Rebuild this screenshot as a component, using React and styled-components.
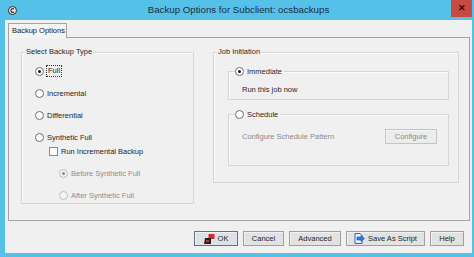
import React from 'react';
import styled, { createGlobalStyle } from 'styled-components';

const Global = createGlobalStyle`
  html, body { margin: 0; padding: 0; background: #55c1e9; }
  body { font-family: "Liberation Sans", Arial, sans-serif; }
  * { box-sizing: border-box; }
`;

const Window = styled.div`
  width: 474px;
  height: 257px;
  background: #55c1e9;
  display: grid;
  grid-template-rows: 20px 1fr;
  padding: 0 2px 4px 5px;
`;

const TitleBar = styled.div`
  display: grid;
  grid-template-columns: 30px 1fr 30px;
  align-items: center;
`;

const AppIcon = styled.svg`
  margin-left: 3px;
`;

const Title = styled.div`
  text-align: center;
  font-size: 9.7px;
  color: #1d2b3c;
  line-height: 20px;
`;

const CloseBtn = styled.div`
  justify-self: end;
  align-self: start;
  width: 21px;
  height: 17px;
  background: #c9483f;
  color: #2a0a08;
  display: flex;
  align-items: center;
  justify-content: center;
  font-size: 9px;
  font-weight: bold;
  line-height: 1;
`;

const Content = styled.div`
  background: #f0f0f0;
  display: flex;
  flex-direction: column;
  padding: 3px 2px 0 3px;
`;

const TabStrip = styled.div`
  display: flex;
  height: 14px;
  position: relative;
  z-index: 1;
`;

const Tab = styled.div`
  width: 59px;
  height: 15px;
  border: 1px solid #a3a3a3;
  border-bottom: none;
  background: #f4f4f4;
  font-size: 7.5px;
  line-height: 13px;
  padding-left: 3px;
  color: #1a1a1a;
  white-space: nowrap;
`;

const Panel = styled.div`
  height: 184px;
  border: 1px solid #a3a3a3;
  background: #f0f0f0;
  display: flex;
  align-items: flex-start;
  gap: 19px;
  padding: 9px 10px 0 12px;
`;

const GroupBox = styled.fieldset`
  margin: 0;
  min-inline-size: 0;
  width: ${p => p.$w}px;
  height: ${p => p.$h}px;
  border: 1px solid #d6d6d6;
  box-shadow: inset 1px 1px 0 #fbfbfb;
  padding: ${p => p.$pad};
  display: flex;
  flex-direction: column;
  gap: ${p => p.$gap || 0}px;
`;

const GroupTitle = styled.legend`
  margin-left: ${p => p.$ml}px;
  padding: 0 1px;
  font-size: 7.5px;
  line-height: 10px;
  color: #1f1f1f;
  white-space: nowrap;
`;

const RadioLegend = styled.legend`
  margin-left: -7px;
  padding: 0 2px 0 0;
  height: 12px;
  display: flex;
  align-items: center;
  gap: 3px;
  font-size: 7.5px;
  color: #1f1f1f;
`;

const OptionColumn = styled.div`
  display: flex;
  flex-direction: column;
  gap: ${p => p.$gap}px;
  padding-left: ${p => p.$indent || 0}px;
`;

const Option = styled.div`
  display: flex;
  align-items: center;
  gap: 3px;
  height: 14px;
  font-size: 7.5px;
  color: ${p => (p.$disabled ? '#8e8e8e' : '#1f1f1f')};
  white-space: nowrap;
`;

const Radio = styled.span`
  width: 9px;
  height: 9px;
  border-radius: 50%;
  border: 1px solid ${p => (p.$disabled ? '#bcbcbc' : '#6f6f6f')};
  background: ${p => (p.$disabled ? '#f4f4f4' : '#ffffff')};
  display: flex;
  align-items: center;
  justify-content: center;
  flex: none;
  &::after {
    content: '';
    width: 3px;
    height: 3px;
    border-radius: 50%;
    background: ${p => (p.$disabled ? '#8a8a8a' : '#1a1a1a')};
    display: ${p => (p.$checked ? 'block' : 'none')};
  }
`;

const Check = styled.span`
  width: 9px;
  height: 9px;
  border: 1px solid #8a8a8a;
  background: #ffffff;
  flex: none;
`;

const Focused = styled.span`
  outline: 1px dotted #333;
  outline-offset: 0;
  padding: 0 1px;
  line-height: 10px;
`;

const Note = styled.div`
  font-size: 7.5px;
  line-height: 10px;
  color: ${p => (p.$disabled ? '#8a8a8a' : '#1f1f1f')};
  white-space: nowrap;
`;

const Row = styled.div`
  display: flex;
  align-items: center;
  justify-content: space-between;
  height: 15px;
`;

const ButtonBar = styled.div`
  display: flex;
  justify-content: flex-end;
  gap: 5px;
  padding: 10px 6px 0 0;
`;

const Button = styled.div`
  width: ${p => p.$w}px;
  height: 15px;
  border: 1px solid ${p => (p.$default ? '#5f7286' : p.$disabled ? '#c4c4c4' : '#9f9f9f')};
  background: ${p => (p.$default ? '#dde2e8' : p.$disabled ? '#ececec' : '#e2e2e2')};
  box-shadow: inset 1px 1px 0 ${p => (p.$disabled ? '#f6f6f6' : '#f2f2f2')};
  display: flex;
  align-items: center;
  justify-content: center;
  gap: 3px;
  font-size: 7.5px;
  color: ${p => (p.$disabled ? '#8a8a8a' : '#1f1f1f')};
  white-space: nowrap;
`;

const OkIcon = () => (
  <svg width="11" height="10" viewBox="0 0 11 10">
    <rect x="4.5" y="0" width="6" height="5" fill="#d42a2a" />
    <path d="M1 4 H7 V10 H0 Z" fill="#222" />
    <rect x="2" y="6" width="3" height="2" fill="#d42a2a" />
  </svg>
);

const ScriptIcon = () => (
  <svg width="11" height="11" viewBox="0 0 11 11">
    <path d="M1 0.5 H6 L8 2.5 V10.5 H1 Z" fill="#e8f0fb" stroke="#2d64c8" />
    <path d="M3 4 H7 V2.5 L10.5 5.5 L7 8.5 V7 H3 Z" fill="#2f7be0" stroke="#1b4fa6" strokeWidth="0.6" />
  </svg>
);

export default function App() {
  return (
    <>
      <Global />
      <Window>
        <TitleBar>
          <AppIcon width="9" height="9" viewBox="0 0 9 9">
            <circle cx="4.5" cy="4.5" r="4" fill="#e6e6e6" stroke="#2b2b2b" strokeWidth="1" />
            <path d="M6 3.2 A1.8 1.8 0 1 0 6 5.8" fill="none" stroke="#2b2b2b" strokeWidth="1.1" />
          </AppIcon>
          <Title>Backup Options for Subclient: ocsbackups</Title>
          <CloseBtn>✕</CloseBtn>
        </TitleBar>
        <Content>
          <TabStrip>
            <Tab>Backup Options</Tab>
          </TabStrip>
          <Panel>
            <GroupBox $w={173} $h={157} $pad="7px 8px 0 13px" $gap={8}>
              <GroupTitle $ml={-10}>Select Backup Type</GroupTitle>
              <Option>
                <Radio $checked />
                <Focused>Full</Focused>
              </Option>
              <Option>
                <Radio />
                Incremental
              </Option>
              <Option>
                <Radio />
                Differential
              </Option>
              <OptionColumn $gap={0}>
                <Option>
                  <Radio />
                  Synthetic Full
                </Option>
                <OptionColumn $gap={8} $indent={14}>
                  <Option>
                    <Check />
                    Run Incremental Backup
                  </Option>
                  <OptionColumn $gap={8} $indent={10}>
                    <Option $disabled>
                      <Radio $checked $disabled />
                      Before Synthetic Full
                    </Option>
                    <Option $disabled>
                      <Radio $disabled />
                      After Synthetic Full
                    </Option>
                  </OptionColumn>
                </OptionColumn>
              </OptionColumn>
            </GroupBox>

            <GroupBox $w={246} $h={136} $pad="8px 9px 0 14px" $gap={8}>
              <GroupTitle $ml={-11}>Job Initiation</GroupTitle>
              <GroupBox $w={221} $h={35} $pad="8px 8px 0 13px">
                <RadioLegend>
                  <Radio $checked />
                  Immediate
                </RadioLegend>
                <Note>Run this job now</Note>
              </GroupBox>
              <GroupBox $w={221} $h={58} $pad="9px 11px 0 13px">
                <RadioLegend>
                  <Radio />
                  Schedule
                </RadioLegend>
                <Row>
                  <Note $disabled>Configure Schedule Pattern</Note>
                  <Button $w={52} $disabled>Configure</Button>
                </Row>
              </GroupBox>
            </GroupBox>
          </Panel>
          <ButtonBar>
            <Button $w={44} $default>
              <OkIcon />
              OK
            </Button>
            <Button $w={41}>Cancel</Button>
            <Button $w={52}>Advanced</Button>
            <Button $w={79}>
              <ScriptIcon />
              Save As Script
            </Button>
            <Button $w={34}>Help</Button>
          </ButtonBar>
        </Content>
      </Window>
    </>
  );
}
